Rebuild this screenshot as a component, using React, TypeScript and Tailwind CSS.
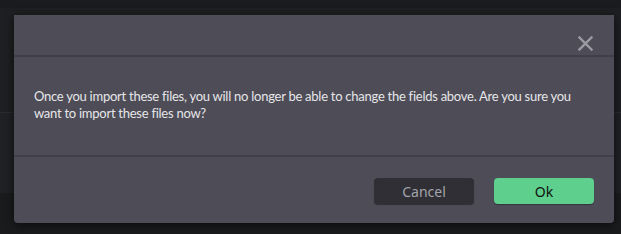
export default function App() {
  return (
    <div
      className="relative w-[621px] h-[234px] overflow-hidden bg-[#1d1e21]"
      style={{ fontFamily: "'Noto Sans', 'Open Sans', sans-serif" }}
    >
      {/* Page behind the modal */}
      <div className="flex flex-col h-full">
        <div className="h-[8px] bg-[#1a1b1e]" />
        <div className="h-[104px] bg-[#1e1f22]" />
        <div className="h-[1px] bg-[#2a2b2f]" />
        <div className="h-[80px] bg-[#202124] flex justify-end items-end pb-[2px]">
          <span className="text-[13px] text-[#8a8a90] mr-[-6px]">t</span>
        </div>
        <div className="flex-1 bg-[#1a1b1d]" />
      </div>

      {/* Modal */}
      <div className="absolute left-[14px] top-[15px] w-[600px] h-[208px] flex flex-col rounded-b-[4px] bg-[#4d4c57] shadow-[0_2px_10px_rgba(0,0,0,0.6)]">
        <div className="h-[42px] flex justify-end items-end pr-[21px] pb-[4px] border-b-2 border-[#413f49]">
          <svg width="15" height="15" viewBox="0 0 15 15" className="text-[#9c9ba3]">
            <path d="M1.5 1.5 L13.5 13.5 M13.5 1.5 L1.5 13.5" stroke="currentColor" strokeWidth="2.4" strokeLinecap="square" />
          </svg>
        </div>

        <div className="h-[100px] border-b-2 border-[#413f49] px-[20px] pt-[31px]">
          <p
            className="text-[13px] leading-[17px] tracking-[-0.26px] text-[#e6e6e8]"
            style={{ fontFamily: "Lato, 'Noto Sans', sans-serif" }}
          >
            Once you import these files, you will no longer be able to change the fields above. Are you sure you
            want to import these files now?
          </p>
        </div>

        <div className="flex-1 flex justify-end items-start gap-[20px] pt-[21px] pr-[20px]">
          <button className="w-[100px] h-[26px] rounded-[4px] bg-[#2f2f35] text-[14px] text-[#a4a4aa] shadow-[0_1px_1px_rgba(0,0,0,0.4)]">
            Cancel
          </button>
          <button className="w-[100px] h-[26px] rounded-[4px] bg-[#5ecf8c] text-[14px] text-[#111] shadow-[0_1px_1px_rgba(0,0,0,0.3)]">
            Ok
          </button>
        </div>
      </div>
    </div>
  );
}
